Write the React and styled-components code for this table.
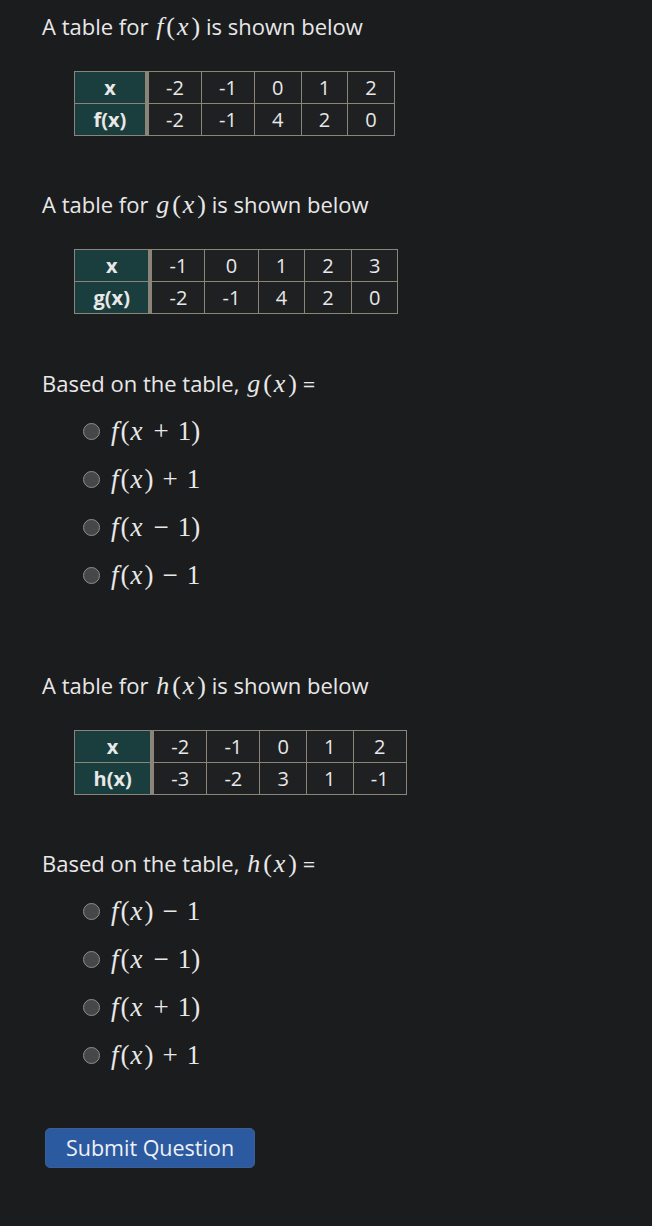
import React from 'react';
import styled, { createGlobalStyle } from 'styled-components';

const GlobalStyle = createGlobalStyle`
  html, body {
    margin: 0;
    padding: 0;
    background: #1b1c1e;
  }
  body {
    font-family: "Open Sans", Lato, sans-serif;
    color: #e8e8e8;
  }
`;

const Page = styled.div`
  min-height: 1226px;
  padding: 12px 0 40px 42px;
  box-sizing: border-box;
`;

const Heading = styled.p`
  margin: 0;
  height: 28px;
  font-size: 22px;
  line-height: 28px;
  white-space: nowrap;
`;

const Math = styled.span`
  font-family: "Liberation Serif", "DejaVu Serif", serif;
  font-size: ${(p) => (p.$tight ? '27px' : '26px')};
  line-height: 1;
  i {
    font-style: italic;
    padding: 0 ${(p) => (p.$tight ? '2px 0 1px' : '3px 0 2px')};
  }
`;

const Op = styled.span`
  padding: 0 9px;
`;

const Table = styled.table`
  margin: 31px 0 0 32px;
  border-collapse: collapse;
  border: 1px solid #8b8579;
  font-size: 20px;
`;

const Cell = styled.td`
  height: 31px;
  padding: 0 17.1px;
  border: 1px solid #8b8579;
  background: #1f2022;
  text-align: center;
  line-height: 20px;
`;

const HeadCell = styled.th`
  height: 31px;
  padding: 0 18.5px;
  border: 1px solid #8b8579;
  border-right: 4px solid #8b8579;
  background: #1a3d3d;
  font-weight: 700;
  line-height: 20px;
`;

const Section = styled.div`
  margin-top: ${(p) => p.$top}px;
`;

const Options = styled.div`
  margin: 10px 0 0 41px;
  display: flex;
  flex-direction: column;
`;

const Option = styled.label`
  height: 48px;
  display: flex;
  align-items: center;
  gap: 10px;
`;

const Radio = styled.span`
  width: 17px;
  height: 17px;
  box-sizing: border-box;
  border-radius: 50%;
  border: 1.5px solid #8d8d8d;
  background: #474747;
  flex: none;
`;

const Button = styled.button`
  margin: 49px 0 0 3px;
  width: 210px;
  height: 40px;
  background: #2c5aa0;
  border: 1px solid #3b5f94;
  border-radius: 5px;
  color: #eef1f6;
  font-family: "Open Sans", Lato, sans-serif;
  font-size: 21.5px;
  padding: 0 0 2px;
`;

const F = ({ op, n, outer }) => (
  <Math $tight>
    <i>f</i>(<i>x</i>
    {!outer && (
      <>
        <Op>{op}</Op>
        {n}
      </>
    )}
    )
    {outer && (
      <>
        <Op>{op}</Op>
        {n}
      </>
    )}
  </Math>
);

const Fn = ({ name }) => (
  <Math>
    <i>{name}</i>(<i>x</i>)
  </Math>
);

const ValueTable = ({ label, xs, ys }) => (
  <Table>
    <tbody>
      <tr>
        <HeadCell>x</HeadCell>
        {xs.map((v, i) => (
          <Cell key={i}>{v}</Cell>
        ))}
      </tr>
      <tr>
        <HeadCell>{label}</HeadCell>
        {ys.map((v, i) => (
          <Cell key={i}>{v}</Cell>
        ))}
      </tr>
    </tbody>
  </Table>
);

const Choices = ({ items }) => (
  <Options>
    {items.map((it, i) => (
      <Option key={i}>
        <Radio />
        <F {...it} />
      </Option>
    ))}
  </Options>
);

const MINUS = '\u2212';

export default function App() {
  return (
    <Page>
      <GlobalStyle />
      <Heading>
        A table for <Fn name="f" /> is shown below
      </Heading>
      <ValueTable label="f(x)" xs={['-2', '-1', '0', '1', '2']} ys={['-2', '-1', '4', '2', '0']} />

      <Section $top={54}>
        <Heading>
          A table for <Fn name="g" /> is shown below
        </Heading>
        <ValueTable label="g(x)" xs={['-1', '0', '1', '2', '3']} ys={['-2', '-1', '4', '2', '0']} />
      </Section>

      <Section $top={55}>
        <Heading>
          Based on the table, <Fn name="g" /> =
        </Heading>
        <Choices
          items={[
            { op: '+', n: 1 },
            { op: '+', n: 1, outer: true },
            { op: MINUS, n: 1 },
            { op: MINUS, n: 1, outer: true },
          ]}
        />
      </Section>

      <Section $top={72}>
        <Heading>
          A table for <Fn name="h" /> is shown below
        </Heading>
        <ValueTable label="h(x)" xs={['-2', '-1', '0', '1', '2']} ys={['-3', '-2', '3', '1', '-1']} />
      </Section>

      <Section $top={54}>
        <Heading>
          Based on the table, <Fn name="h" /> =
        </Heading>
        <Choices
          items={[
            { op: MINUS, n: 1, outer: true },
            { op: MINUS, n: 1 },
            { op: '+', n: 1 },
            { op: '+', n: 1, outer: true },
          ]}
        />
      </Section>

      <Button type="button">Submit Question</Button>
    </Page>
  );
}
